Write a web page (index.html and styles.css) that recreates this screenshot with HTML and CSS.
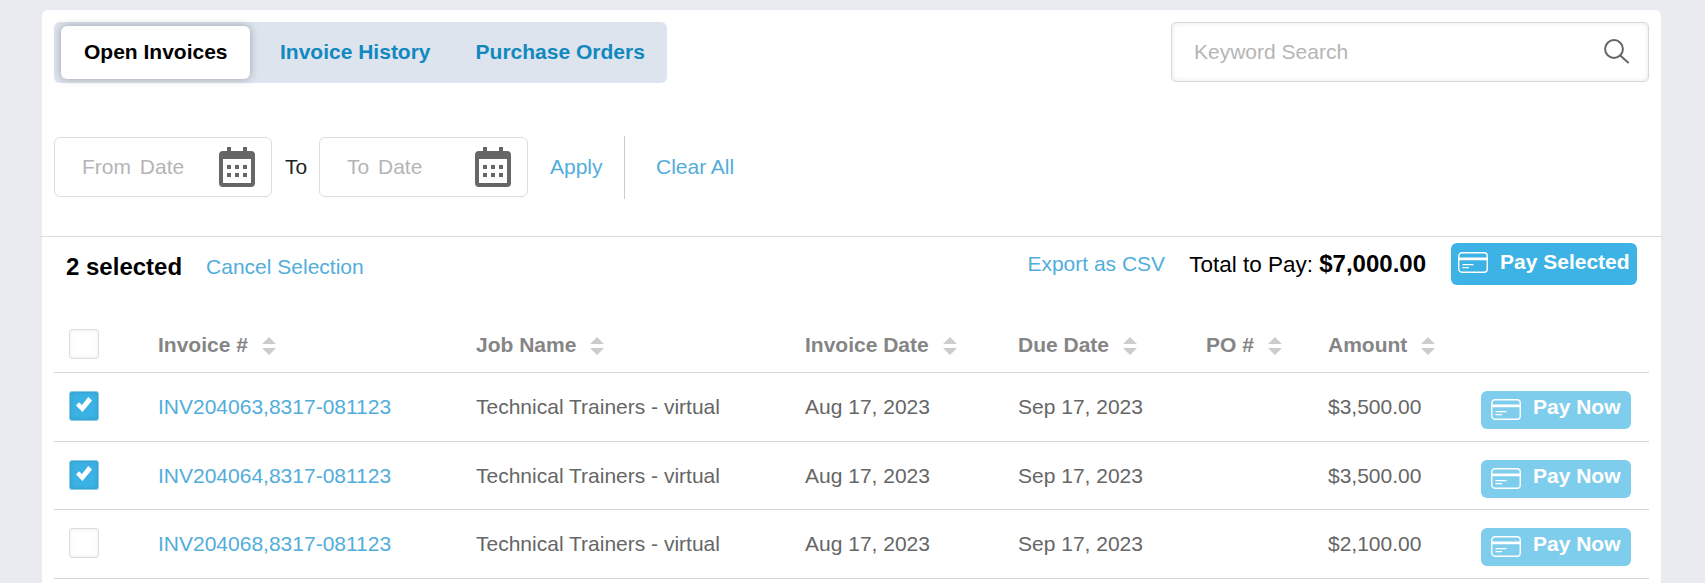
FILE: index.html
```html
<!DOCTYPE html>
<html lang="en">
  <head>
    <meta charset="UTF-8" />
    <meta name="viewport" content="width=device-width, initial-scale=1.0" />
    <title>Open Invoices</title>
    <link rel="stylesheet" href="styles.css">
  </head>
  <body>
    <!-- shared icons -->
    <svg class="sprite" width="0" height="0">
      <symbol id="calendar" viewBox="0 0 36 40">
        <path fill-rule="evenodd" d="M8 0h4v4h12V0h4v4h4a4 4 0 0 1 4 4v28a4 4 0 0 1-4 4H4a4 4 0 0 1-4-4V8a4 4 0 0 1 4-4h4zM4 12v24h28V12z" />
        <path d="M8 18h4v4H8zM16 18h4v4h-4zM24 18h4v4h-4zM8 26h4v4H8zM16 26h4v4h-4zM24 26h4v4h-4z" />
      </symbol>
      <symbol id="card" viewBox="0 0 30 21">
        <rect x="0.75" y="0.75" width="28.5" height="19.5" rx="3.2" fill="none" stroke="#fff" stroke-width="1.4" />
        <path d="M1 5.5h28v2.8H1zM4.5 12h11v1.3h-11zM4.5 15h6.5v1.3H4.5z" fill="#fff" />
      </symbol>
      <symbol id="sort" viewBox="0 0 14 18">
        <path d="M7 0l7 7H0zM0 11h14l-7 7z" />
      </symbol>
      <symbol id="check" viewBox="0 0 16 15">
        <path d="M0 8.5L3 5.2L6 8L12.3 0L16 3.5L6.5 15z" />
      </symbol>
    </svg>

    <div class="panel">
      <div class="top-bar">
        <div class="tabs">
          <a class="tab active">Open Invoices</a>
          <a class="tab">Invoice History</a>
          <a class="tab">Purchase Orders</a>
        </div>
        <div class="search">
          <span>Keyword Search</span>
          <svg width="26" height="25" viewBox="0 0 26 25">
            <circle cx="10" cy="10" r="8.9" />
            <path d="M16 16.2L24.6 24" />
          </svg>
        </div>
      </div>

      <div class="filters">
        <div class="date from">
          <span>From Date</span>
          <svg class="cal"><use href="#calendar" /></svg>
        </div>
        <span class="to">To</span>
        <div class="date until">
          <span>To Date</span>
          <svg class="cal"><use href="#calendar" /></svg>
        </div>
        <a class="link apply">Apply</a>
        <a class="link clear">Clear All</a>
      </div>

      <div class="summary">
        <strong class="count">2 selected</strong>
        <a class="link cancel">Cancel Selection</a>
        <div class="pay-info">
          <a class="link">Export as CSV</a>
          <span class="total">Total to Pay: <strong>$7,000.00</strong></span>
          <button class="btn pay-selected"><svg class="card"><use href="#card" /></svg>Pay Selected</button>
        </div>
      </div>

      <div class="table">
        <div class="row head">
          <span class="box"></span>
          <span>Invoice #<svg class="sort"><use href="#sort" /></svg></span>
          <span>Job Name<svg class="sort"><use href="#sort" /></svg></span>
          <span>Invoice Date<svg class="sort"><use href="#sort" /></svg></span>
          <span>Due Date<svg class="sort"><use href="#sort" /></svg></span>
          <span>PO #<svg class="sort"><use href="#sort" /></svg></span>
          <span>Amount<svg class="sort"><use href="#sort" /></svg></span>
        </div>
        <div class="row">
          <span class="box checked"><svg class="check"><use href="#check" /></svg></span>
          <a class="link">INV204063,8317-081123</a>
          <span>Technical Trainers - virtual</span>
          <span>Aug 17, 2023</span>
          <span>Sep 17, 2023</span>
          <span></span>
          <span>$3,500.00</span>
          <button class="btn pay-now"><svg class="card"><use href="#card" /></svg>Pay Now</button>
        </div>
        <div class="row">
          <span class="box checked"><svg class="check"><use href="#check" /></svg></span>
          <a class="link">INV204064,8317-081123</a>
          <span>Technical Trainers - virtual</span>
          <span>Aug 17, 2023</span>
          <span>Sep 17, 2023</span>
          <span></span>
          <span>$3,500.00</span>
          <button class="btn pay-now"><svg class="card"><use href="#card" /></svg>Pay Now</button>
        </div>
        <div class="row">
          <span class="box"></span>
          <a class="link">INV204068,8317-081123</a>
          <span>Technical Trainers - virtual</span>
          <span>Aug 17, 2023</span>
          <span>Sep 17, 2023</span>
          <span></span>
          <span>$2,100.00</span>
          <button class="btn pay-now"><svg class="card"><use href="#card" /></svg>Pay Now</button>
        </div>
      </div>
    </div>
  </body>
</html>
```
FILE: styles.css
```css
* {
  box-sizing: border-box;
}
body {
  margin: 0;
  padding: 10px 44px 0 42px;
  height: 583px;
  overflow: hidden;
  background: #e9ebf0;
  font-family: "Liberation Sans", Arial, sans-serif;
  font-size: 21px;
  line-height: 24px;
  color: #666;
}
.sprite {
  position: absolute;
}
.panel {
  height: 600px;
  padding-top: 12px;
  background: #fff;
  border-radius: 6px 6px 0 0;
}
.link {
  color: #52addb;
}

/* tabs and search */
.top-bar {
  display: flex;
  justify-content: space-between;
  align-items: flex-start;
  padding: 0 12px;
}
.tabs {
  display: flex;
  width: 613px;
  height: 61px;
  padding: 4px 0 4px 7px;
  background: #dde4ee;
  border-radius: 6px;
}
.tab {
  padding: 14px 22px 0 23px;
  color: #1288c0;
  font-weight: bold;
}
.tab + .tab {
  margin-left: 7px;
}
.tab:last-child {
  margin-left: 0;
}
.tab.active {
  width: 189px;
  color: #000;
  background: #fff;
  border-radius: 6px;
  box-shadow: 0 0 8px rgba(0, 0, 0, 0.3);
}
.search {
  display: flex;
  justify-content: space-between;
  width: 478px;
  height: 60px;
  padding: 17px 18px 0 22px;
  border: 1px solid #d9d9d9;
  border-radius: 5px;
  box-shadow: inset 0 0 5px rgba(0, 0, 0, 0.1);
  color: #b5b5b5;
}
.search svg {
  margin-top: -1px;
  fill: none;
  stroke: #666;
  stroke-width: 2;
}

/* date range */
.filters {
  display: flex;
  height: 100px;
  margin-top: 53px;
  padding-left: 12px;
}
.date {
  display: flex;
  justify-content: space-between;
  height: 60px;
  margin-top: 1px;
  padding: 17px 16px 0 27px;
  border: 1px solid #ddd;
  border-radius: 6px;
  color: #b5b5b5;
  word-spacing: 3px;
}
.from {
  width: 218px;
}
.until {
  width: 209px;
}
.cal {
  width: 36px;
  height: 40px;
  margin-top: -8px;
  fill: #666;
}
.to {
  width: 47px;
  padding: 19px 0 0 13px;
  color: #222;
}
.apply {
  width: 97px;
  height: 63px;
  padding: 19px 0 0 22px;
  border-right: 1px solid #ccc;
}
.clear {
  padding: 19px 0 0 31px;
}

/* selection summary */
.summary {
  display: flex;
  height: 77px;
  margin: 0 -2px;
  padding: 6px 26px 0;
  border-top: 1px solid #dcdcde;
}
.count {
  padding-top: 12px;
  font-size: 24px;
  color: #000;
}
.cancel {
  padding: 12px 0 0 24px;
}
.pay-info {
  display: flex;
  margin-left: auto;
}
.pay-info .link {
  padding-top: 9px;
}
.total {
  padding: 9px 25px 0 24px;
  font-size: 22.5px;
  color: #000;
}
.total strong {
  font-size: 24px;
}
.btn {
  display: flex;
  border: 0;
  border-radius: 6px;
  font: bold 21px/24px "Liberation Sans", Arial, sans-serif;
  color: #fff;
  white-space: nowrap;
}
.card {
  width: 30px;
  height: 21px;
  flex: none;
}
.pay-selected {
  width: 186px;
  height: 42px;
  padding: 7px 0 0 7px;
  background: #3db3e5;
}
.pay-selected .card {
  margin: 2px 12px 0 0;
}

/* invoice table */
.table {
  margin: 0 12px;
}
.row {
  display: grid;
  grid-template-columns: 89px 318px 329px 213px 188px 122px 153px 150px;
  align-items: start;
  height: 68.7px;
  padding: 22px 0 0 15px;
  border-bottom: 1px solid #d5d5d5;
  white-space: nowrap;
}
.head {
  height: 60px;
  padding-top: 20px;
  font-weight: bold;
  color: #858585;
}
.sort {
  width: 14px;
  height: 18px;
  margin: 0 0 -3px 14px;
  fill: #ccc;
}
.box {
  width: 30px;
  height: 30px;
  margin-top: -4px;
  border: 1px solid #ddd;
  border-radius: 3px;
  box-shadow: inset 0 0 4px rgba(0, 0, 0, 0.08);
}
.checked {
  background: #3bb2e4;
  border-color: #8cc9e3;
  box-shadow: inset 0 0 4px rgba(0, 0, 0, 0.15);
}
.check {
  display: block;
  width: 16px;
  height: 15px;
  margin: 5px 0 0 6px;
  fill: #fff;
}
.pay-now {
  height: 38px;
  margin-top: -4px;
  padding: 4px 0 0 10px;
  background: #7fcdec;
}
.pay-now .card {
  margin: 4px 12px 0 0;
}
```
